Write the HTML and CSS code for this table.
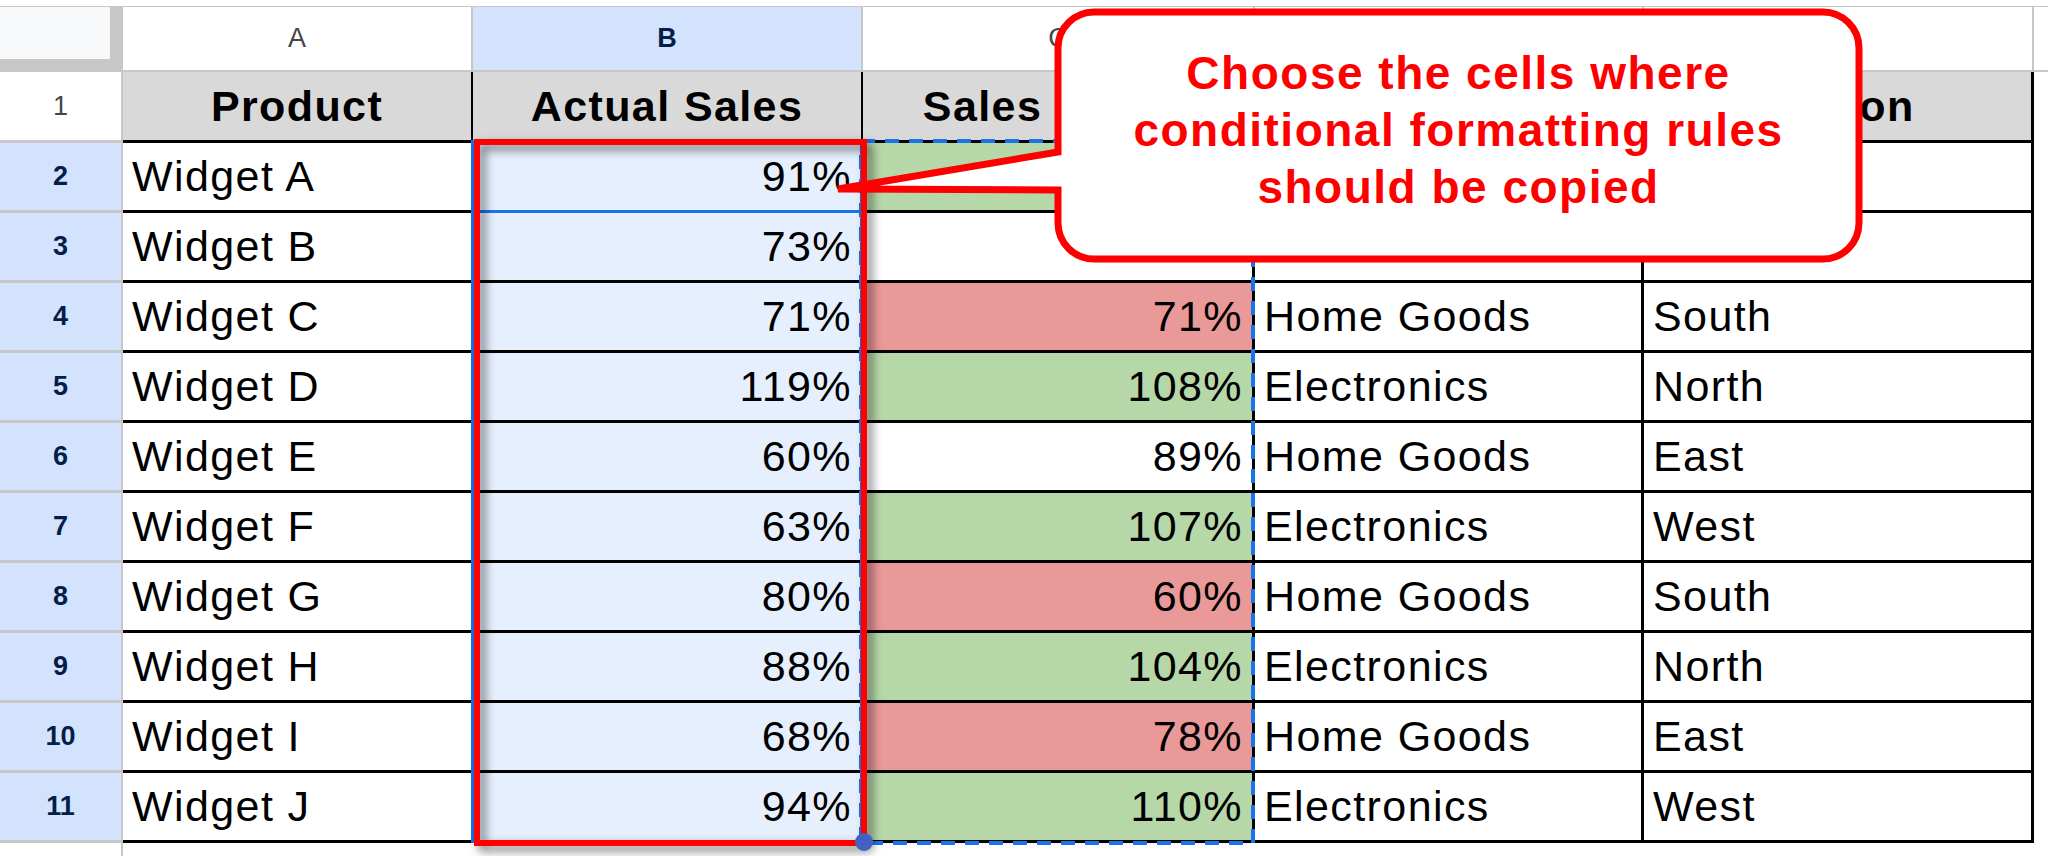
FILE: index.html
```html
<!DOCTYPE html>
<html>
<head>
<meta charset="utf-8">
<title>Sheet</title>
<link rel="stylesheet" href="styles.css">
</head>
<body>
<div class="page">
  <div class="sheet">
    <div class="cell corner"></div>
    <div class="cell colhead">A</div>
    <div class="cell colhead sel">B</div>
    <div class="cell colhead">C</div>
    <div class="cell colhead">D</div>
    <div class="cell colhead">E</div>
    <div class="cell colhead end"></div>

    <div class="cell rowhead">1</div>
    <div class="cell hd">Product</div>
    <div class="cell hd">Actual Sales</div>
    <div class="cell hd thick">Sales Target</div>
    <div class="cell hd thick"></div>
    <div class="cell hd thick">Region</div>
    <div class="cell filler"></div>

    <div class="cell rowhead sel">2</div>
    <div class="cell td">Widget A</div>
    <div class="cell td num selb">91%</div>
    <div class="cell td num thick green"></div>
    <div class="cell td thick"></div>
    <div class="cell td thick"></div>
    <div class="cell filler"></div>

    <div class="cell rowhead sel">3</div>
    <div class="cell td">Widget B</div>
    <div class="cell td num selb">73%</div>
    <div class="cell td num thick"></div>
    <div class="cell td thick"></div>
    <div class="cell td thick"></div>
    <div class="cell filler"></div>

    <div class="cell rowhead sel">4</div>
    <div class="cell td">Widget C</div>
    <div class="cell td num selb">71%</div>
    <div class="cell td num thick red">71%</div>
    <div class="cell td thick">Home Goods</div>
    <div class="cell td thick">South</div>
    <div class="cell filler"></div>

    <div class="cell rowhead sel">5</div>
    <div class="cell td">Widget D</div>
    <div class="cell td num selb">119%</div>
    <div class="cell td num thick green">108%</div>
    <div class="cell td thick">Electronics</div>
    <div class="cell td thick">North</div>
    <div class="cell filler"></div>

    <div class="cell rowhead sel">6</div>
    <div class="cell td">Widget E</div>
    <div class="cell td num selb">60%</div>
    <div class="cell td num thick">89%</div>
    <div class="cell td thick">Home Goods</div>
    <div class="cell td thick">East</div>
    <div class="cell filler"></div>

    <div class="cell rowhead sel">7</div>
    <div class="cell td">Widget F</div>
    <div class="cell td num selb">63%</div>
    <div class="cell td num thick green">107%</div>
    <div class="cell td thick">Electronics</div>
    <div class="cell td thick">West</div>
    <div class="cell filler"></div>

    <div class="cell rowhead sel">8</div>
    <div class="cell td">Widget G</div>
    <div class="cell td num selb">80%</div>
    <div class="cell td num thick red">60%</div>
    <div class="cell td thick">Home Goods</div>
    <div class="cell td thick">South</div>
    <div class="cell filler"></div>

    <div class="cell rowhead sel">9</div>
    <div class="cell td">Widget H</div>
    <div class="cell td num selb">88%</div>
    <div class="cell td num thick green">104%</div>
    <div class="cell td thick">Electronics</div>
    <div class="cell td thick">North</div>
    <div class="cell filler"></div>

    <div class="cell rowhead sel">10</div>
    <div class="cell td">Widget I</div>
    <div class="cell td num selb">68%</div>
    <div class="cell td num thick red">78%</div>
    <div class="cell td thick">Home Goods</div>
    <div class="cell td thick">East</div>
    <div class="cell filler"></div>

    <div class="cell rowhead sel">11</div>
    <div class="cell td">Widget J</div>
    <div class="cell td num selb">94%</div>
    <div class="cell td num thick green">110%</div>
    <div class="cell td thick">Electronics</div>
    <div class="cell td thick">West</div>
    <div class="cell filler"></div>

    <div class="cell rowhead last"></div>
    <div class="cell filler"></div>
    <div class="cell filler"></div>
    <div class="cell filler"></div>
    <div class="cell filler"></div>
    <div class="cell filler"></div>
    <div class="cell filler"></div>
  </div>

  <div class="range-sel"></div>
  <div class="active-cell"></div>
  <svg class="marquee" width="396" height="706" viewBox="0 0 396 706">
    <rect x="2" y="2" width="392" height="702" fill="none" stroke="#1a73e8" stroke-width="4" stroke-dasharray="14 10"/>
  </svg>
  <div class="red-box"></div>
  <div class="fill-handle"></div>

  <div class="callout">
    <svg class="callout-shape" width="1040" height="280" viewBox="0 0 1040 280">
      <path d="M 264 12 H 993 A 36 36 0 0 1 1029 48 V 223 A 36 36 0 0 1 993 259 H 264 A 36 36 0 0 1 228 223 V 190 L 8 189 L 228 152 V 48 A 36 36 0 0 1 264 12 Z" fill="#ffffff" stroke="#ff0000" stroke-width="7"/>
    </svg>
    <p class="callout-text">Choose the cells where<br>conditional formatting rules<br>should be copied</p>
  </div>
</div>
</body>
</html>
```

FILE: styles.css
```css
html, body {
  margin: 0;
  padding: 0;
  background: #ffffff;
}

body {
  width: 2048px;
  height: 856px;
  overflow: hidden;
  font-family: "Liberation Sans", Arial, sans-serif;
  color: #000000;
}

.page {
  position: relative;
  width: 2048px;
  height: 856px;
  overflow: hidden;
}

.sheet {
  display: grid;
  grid-template-columns: 123px 350px 390px 392px 389px 390px 14px;
  grid-template-rows: 65px 71px repeat(10, 70px) 40px;
  margin-top: 6px;
  border-top: 1px solid #c7c7c7;
}

.cell {
  box-sizing: border-box;
  display: flex;
  align-items: center;
  overflow: hidden;
  white-space: nowrap;
}

.corner {
  background: #f8f9fa;
  border-right: 13px solid #c7c7c7;
  border-bottom: 13px solid #c7c7c7;
}

.colhead {
  justify-content: center;
  font-size: 27px;
  color: #444746;
  background: #ffffff;
  border-right: 2px solid #c7c7c7;
  border-bottom: 2px solid #c7c7c7;
}

.colhead.sel {
  background: #d3e3fd;
  color: #041e49;
  font-weight: bold;
}

.colhead.end {
  border-right: 0;
}

.rowhead {
  justify-content: center;
  font-size: 27px;
  color: #444746;
  background: #ffffff;
  border-right: 2px solid #c7c7c7;
  border-bottom: 3px solid #c7c7c7;
}

.rowhead.sel {
  background: #d3e3fd;
  color: #041e49;
  font-weight: bold;
}

.rowhead.last {
  border-bottom: 0;
}

.hd {
  justify-content: center;
  background: #d9d9d9;
  font-size: 43px;
  font-weight: bold;
  letter-spacing: 1.4px;
  border-right: 2px solid #000000;
  border-bottom: 3px solid #000000;
}

.td {
  font-size: 43px;
  letter-spacing: 1.4px;
  padding: 0 9px;
  background: #ffffff;
  border-right: 2px solid #000000;
  border-bottom: 3px solid #000000;
}

.thick {
  border-right-width: 3px;
}

.num {
  justify-content: flex-end;
}

.selb {
  background: #e6effd;
}

.green {
  background: #b6d7a8;
}

.red {
  background: #ea9999;
}

.filler {
  background: #ffffff;
}

.range-sel {
  position: absolute;
  left: 471px;
  top: 141px;
  width: 392px;
  height: 702px;
  box-sizing: border-box;
  border: 3px solid #1a73e8;
}

.active-cell {
  position: absolute;
  left: 471px;
  top: 140px;
  width: 392px;
  height: 73px;
  box-sizing: border-box;
  border: 3px solid #1a73e8;
}

.marquee {
  position: absolute;
  left: 859px;
  top: 139px;
}

.red-box {
  position: absolute;
  left: 474px;
  top: 139px;
  width: 393px;
  height: 707px;
  box-sizing: border-box;
  border: 6px solid #ff0000;
  filter: drop-shadow(5px 5px 5px rgba(0, 0, 0, 0.55));
}

.fill-handle {
  position: absolute;
  left: 855px;
  top: 833px;
  width: 18px;
  height: 18px;
  border-radius: 50%;
  background: #4161c3;
}

.callout {
  position: absolute;
  left: 1055px;
  top: 9px;
  width: 807px;
  height: 253px;
  box-sizing: border-box;
  padding-bottom: 11px;
  display: flex;
  align-items: center;
  justify-content: center;
}

.callout-shape {
  position: absolute;
  left: -225px;
  top: -9px;
  overflow: visible;
}

.callout-text {
  position: relative;
  margin: 0;
  color: #ff0000;
  font-weight: bold;
  font-size: 46px;
  line-height: 57px;
  letter-spacing: 1.5px;
  text-align: center;
}
```
